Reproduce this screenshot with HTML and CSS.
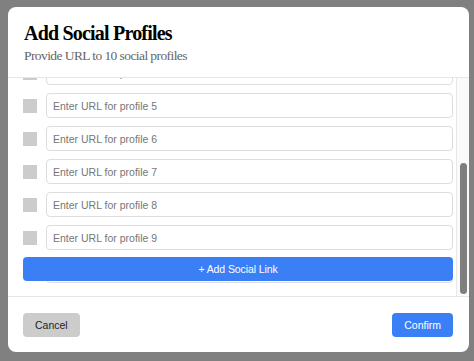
FILE: index.html
```html
<!DOCTYPE html>
<html lang="en">
<head>
<meta charset="utf-8">
<title>Add Social Profiles</title>
<link rel="stylesheet" href="styles.css">
</head>
<body>
<div class="overlay">
  <div class="modal">
    <div class="modal-header">
      <h2 class="title">Add Social Profiles</h2>
      <p class="subtitle">Provide URL to 10 social profiles</p>
    </div>
    <div class="modal-body">
      <div class="viewport">
        <div class="list-wrap">
          <div class="rows">
            <div class="row"><input type="checkbox" class="check"><input type="text" class="url" placeholder="Enter URL for profile 1"></div>
            <div class="row"><input type="checkbox" class="check"><input type="text" class="url" placeholder="Enter URL for profile 2"></div>
            <div class="row"><input type="checkbox" class="check"><input type="text" class="url" placeholder="Enter URL for profile 3"></div>
            <div class="row"><input type="checkbox" class="check"><input type="text" class="url" placeholder="Enter URL for profile 4"></div>
            <div class="row"><input type="checkbox" class="check"><input type="text" class="url" placeholder="Enter URL for profile 5"></div>
            <div class="row"><input type="checkbox" class="check"><input type="text" class="url" placeholder="Enter URL for profile 6"></div>
            <div class="row"><input type="checkbox" class="check"><input type="text" class="url" placeholder="Enter URL for profile 7"></div>
            <div class="row"><input type="checkbox" class="check"><input type="text" class="url" placeholder="Enter URL for profile 8"></div>
            <div class="row"><input type="checkbox" class="check"><input type="text" class="url" placeholder="Enter URL for profile 9"></div>
            <div class="row"><input type="checkbox" class="check"><input type="text" class="url" placeholder="Enter URL for profile 10"></div>
          </div>
          <button class="add-btn" type="button">+ Add Social Link</button>
        </div>
      </div>
      <div class="scrollbar"><div class="thumb"></div></div>
    </div>
    <div class="modal-footer">
      <button class="btn btn-cancel" type="button">Cancel</button>
      <button class="btn btn-confirm" type="button">Confirm</button>
    </div>
  </div>
</div>
</body>
</html>
```

FILE: styles.css
```css
html, body {
  margin: 0;
  padding: 0;
}

body {
  background: #808080;
  font-family: "Liberation Serif", "Times New Roman", serif;
}

.overlay {
  box-sizing: border-box;
  width: 100%;
  height: 361px;
  padding: 7px 5px 9px 8px;
  display: flex;
}

.modal {
  flex: 1;
  background: #ffffff;
  border-radius: 8px;
  overflow: hidden;
  display: flex;
  flex-direction: column;
}

.modal-header {
  padding: 15px 16px 14px;
  border-bottom: 1px solid #e6e6e6;
  flex-shrink: 0;
}

.title {
  margin: 0;
  font-size: 20px;
  font-weight: bold;
  line-height: 23px;
  letter-spacing: -0.8px;
  color: #000;
}

.subtitle {
  margin: 3px 0 0;
  font-size: 13.5px;
  line-height: 15px;
  letter-spacing: -0.58px;
  color: #666666;
}

.modal-body {
  flex: 1;
  min-height: 0;
  display: flex;
}

.viewport {
  flex: 1;
  min-width: 0;
  overflow: hidden;
  display: flex;
  flex-direction: column-reverse;
}

.scrollbar {
  width: 7px;
  flex-shrink: 0;
  background: #fafafa;
  border-left: 1px solid #e8e8e8;
  padding: 0 2px 2px 3px;
  display: flex;
  flex-direction: column;
  justify-content: flex-end;
}

.thumb {
  height: 131px;
  background: #7e7e7e;
  border-radius: 4px;
}

.list-wrap {
  position: relative;
  flex-shrink: 0;
  padding: 12px 3px 13px 15px;
}

.rows {
  display: flex;
  flex-direction: column;
  gap: 8px;
}

.row {
  display: flex;
  align-items: center;
  gap: 9px;
}

.check {
  appearance: none;
  -webkit-appearance: none;
  width: 14px;
  height: 14px;
  margin: 0;
  background: #cccccc;
  border: none;
  flex-shrink: 0;
}

.url {
  flex: 1;
  min-width: 0;
  box-sizing: border-box;
  height: 25px;
  margin: 0;
  padding: 0 6px;
  border: 1px solid #dddddd;
  border-radius: 4px;
  background: #fff;
  font-family: "Liberation Sans", Arial, sans-serif;
  font-size: 10.5px;
  color: #333;
}

.url::placeholder {
  color: #767676;
}

.add-btn {
  position: absolute;
  left: 15px;
  right: 3px;
  bottom: 15px;
  height: 24px;
  margin: 0;
  padding: 0;
  border: none;
  border-radius: 4px;
  background: #3b7ff6;
  color: #ffffff;
  font-family: "Liberation Sans", Arial, sans-serif;
  font-size: 10.5px;
  letter-spacing: -0.1px;
}

.modal-footer {
  flex-shrink: 0;
  border-top: 1px solid #e6e6e6;
  padding: 16px 16px 15px 15px;
  display: flex;
  justify-content: space-between;
  align-items: center;
}

.btn {
  height: 24px;
  margin: 0;
  padding: 0 12px;
  border: none;
  border-radius: 4px;
  font-family: "Liberation Sans", Arial, sans-serif;
  font-size: 10.5px;
}

.btn-cancel {
  background: #cccccc;
  color: #222222;
}

.btn-confirm {
  background: #3b7ff6;
  color: #ffffff;
}
```
